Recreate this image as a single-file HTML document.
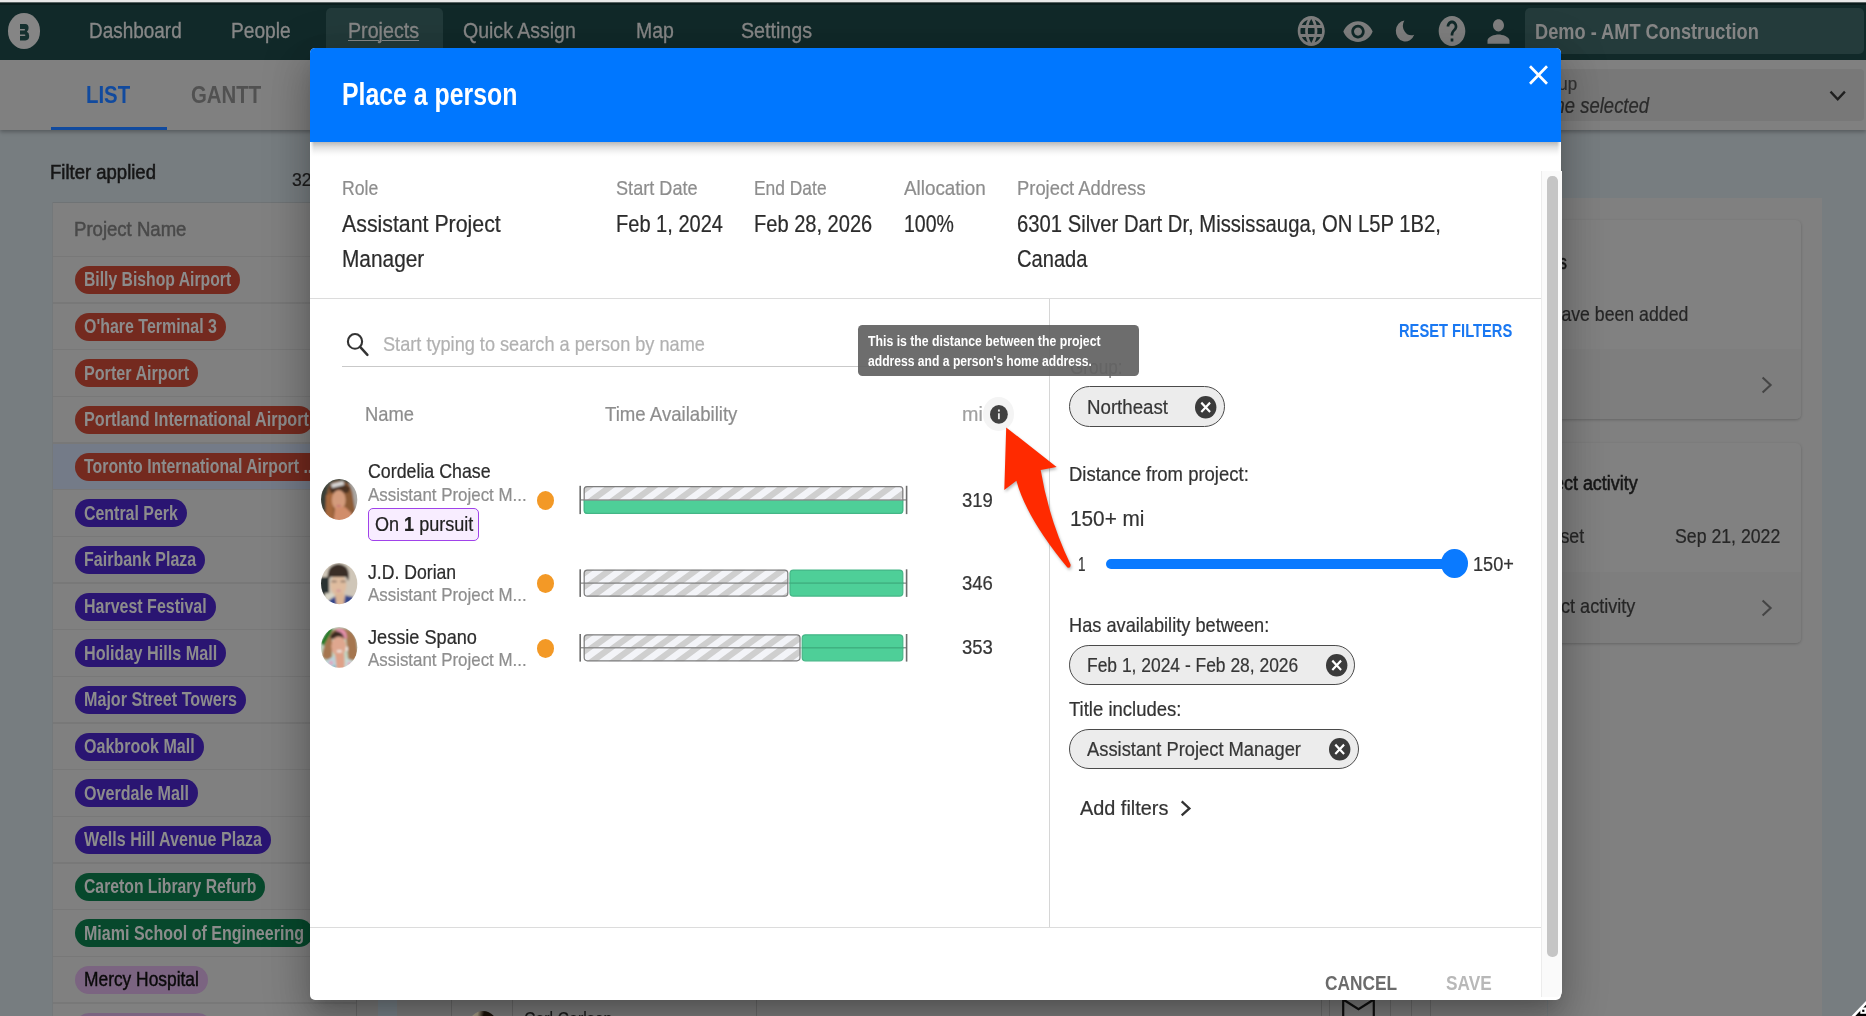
<!DOCTYPE html>
<html><head><meta charset="utf-8"><title>Place a person</title>
<style>
html,body{margin:0;padding:0;width:1866px;height:1016px;overflow:hidden;}
body{width:1866px;height:1016px;overflow:hidden;position:relative;background:#777d80;font-family:"Liberation Sans",sans-serif;}
.t{position:absolute;white-space:nowrap;line-height:1;transform-origin:0 0;-webkit-text-stroke:0.22px currentColor;}
.b{position:absolute;}
svg{position:absolute;overflow:visible;}
#root{position:absolute;left:0;top:0;width:1866px;height:1016px;overflow:hidden;}
</style></head><body><div id="root">
<div class="b" style="left:52.00px;top:202.00px;width:305.00px;height:900.00px;background:#808080;"></div>
<div class="b" style="left:357.00px;top:202.50px;width:1190.00px;height:900.00px;background:#808080;"></div>
<div class="b" style="left:1548.00px;top:197.50px;width:273.50px;height:900.00px;background:#808080;"></div>
<div class="b" style="left:0.00px;top:60.00px;width:1866.00px;height:70.30px;background:#808080;box-shadow:0 2px 4px rgba(0,0,0,.28);"></div>
<div class="b" style="left:0.00px;top:0.00px;width:1866.00px;height:60.30px;background:#112929;"></div>
<div class="b" style="left:0.00px;top:0.00px;width:1866.00px;height:2.00px;background:#e9e9e9;"></div>
<div class="b" style="left:0.00px;top:2.00px;width:1866.00px;height:1.00px;background:#5a6464;"></div>
<div class="b" style="left:0.00px;top:3.00px;width:1866.00px;height:1.50px;background:#0b1d1d;"></div>
<div class="b" style="left:7.9px;top:13.4px;width:32.4px;height:35.5px;border-radius:50%;background:#858585;"></div>
<svg style="left:19.9px;top:23.7px" width="9.2" height="16.4" viewBox="0 0 9.2 16.4"><path fill="#15302f" fill-rule="evenodd" d="M0 0 H5.2 Q8.6 0 8.6 3.9 Q8.6 6.6 6.9 7.7 Q9.2 8.8 9.2 12 Q9.2 16.4 5.4 16.4 H0 Z M0 4.9 V6.5 H4.3 Q5.1 6.5 5.1 5.7 Q5.1 4.9 4.3 4.9 Z M0 10.4 V12.0 H4.6 Q5.4 12.0 5.4 11.2 Q5.4 10.4 4.6 10.4 Z"/></svg>
<div class="t" style="left:89.00px;top:20.20px;font-size:21.95px;transform:scaleX(0.8639);color:#878787;-webkit-text-stroke:0.35px #878787;">Dashboard</div>
<div class="t" style="left:231.40px;top:20.20px;font-size:21.95px;transform:scaleX(0.8720);color:#878787;-webkit-text-stroke:0.35px #878787;">People</div>
<div class="b" style="left:326.00px;top:7.50px;width:117.00px;height:60.00px;background:#223a3a;border-radius:5px 5px 0 0;"></div>
<div class="t" style="left:348.15px;top:20.20px;font-size:21.95px;transform:scaleX(0.8969);color:#878787;-webkit-text-stroke:0.35px #878787;text-decoration:underline;text-decoration-thickness:1.3px;text-underline-offset:1.6px;">Projects</div>
<div class="t" style="left:462.65px;top:20.20px;font-size:21.95px;transform:scaleX(0.8896);color:#878787;-webkit-text-stroke:0.35px #878787;">Quick Assign</div>
<div class="t" style="left:635.65px;top:20.20px;font-size:21.95px;transform:scaleX(0.8867);color:#878787;-webkit-text-stroke:0.35px #878787;">Map</div>
<div class="t" style="left:741.10px;top:20.20px;font-size:21.95px;transform:scaleX(0.8966);color:#878787;-webkit-text-stroke:0.35px #878787;">Settings</div>
<div class="b" style="left:1525.00px;top:8.00px;width:339.00px;height:45.80px;background:#243b3b;border-radius:5px;"></div>
<div class="t" style="left:1534.70px;top:20.60px;font-size:21.22px;transform:scaleX(0.8578);color:#858585;font-weight:bold;-webkit-text-stroke:0;">Demo - AMT Construction</div>
<svg style="left:1295.10px;top:13.00px" width="32.50" height="36.00" viewBox="0 0 24 24" preserveAspectRatio="none"><path fill="#7f7f7f" d="M11.99 2C6.47 2 2 6.48 2 12s4.47 10 9.99 10C17.52 22 22 17.52 22 12S17.52 2 11.99 2zm6.93 6h-2.95c-.32-1.25-.78-2.45-1.38-3.56 1.84.63 3.37 1.91 4.33 3.56zM12 4.04c.83 1.2 1.48 2.53 1.91 3.96h-3.82c.43-1.43 1.08-2.76 1.91-3.96zM4.26 14C4.1 13.36 4 12.69 4 12s.1-1.36.26-2h3.38c-.08.66-.14 1.32-.14 2 0 .68.06 1.34.14 2H4.26zm.82 2h2.95c.32 1.25.78 2.45 1.38 3.56-1.84-.63-3.37-1.9-4.33-3.56zm2.95-8H5.08c.96-1.66 2.49-2.93 4.33-3.56C8.81 5.55 8.35 6.75 8.03 8zM12 19.96c-.83-1.2-1.48-2.53-1.91-3.96h3.82c-.43 1.43-1.08 2.76-1.91 3.96zM14.34 14H9.66c-.09-.66-.16-1.32-.16-2 0-.68.07-1.35.16-2h4.68c.09.65.16 1.32.16 2 0 .68-.07 1.34-.16 2zm.25 5.56c.6-1.11 1.06-2.31 1.38-3.56h2.95c-.96 1.65-2.49 2.93-4.33 3.56zM16.36 14c.08-.66.14-1.32.14-2 0-.68-.06-1.34-.14-2h3.38c.16.64.26 1.31.26 2s-.1 1.36-.26 2h-3.38z"/></svg>
<svg style="left:1342.10px;top:14.70px" width="32.00" height="33.20" viewBox="0 0 24 24" preserveAspectRatio="none"><path fill="#7f7f7f" d="M12 4.5C7 4.5 2.73 7.61 1 12c1.73 4.39 6 7.500 11 7.500s9.270-3.110 11-7.500c-1.730-4.390-6-7.500-11-7.500zM12 17c-2.760 0-5-2.240-5-5s2.240-5 5-5 5 2.240 5 5-2.240 5-5 5zm0-8c-1.660 0-3 1.340-3 3s1.340 3 3 3 3-1.340 3-3-1.340-3-3-3z"/></svg>
<svg style="left:0;top:0" width="1866" height="70" viewBox="0 0 1866 70"><path fill="#7f7f7f" d="M1404.4 20.6 A9.5 10.5 0 1 0 1414.2 34.8 A8.6 9.45 0 0 1 1404.4 20.6Z"/></svg>
<svg style="left:1435.80px;top:13.00px" width="32.00" height="36.00" viewBox="0 0 24 24" preserveAspectRatio="none"><path fill="#7f7f7f" d="M12 2C6.480 2 2 6.480 2 12s4.480 10 10 10 10-4.480 10-10S17.520 2 12 2zm1 17h-2v-2h2v2zm2.070-7.750l-.9.920C13.450 12.900 13 13.500 13 15h-2v-.5c0-1.100.450-2.100 1.170-2.830l1.240-1.260c.370-.360.590-.860.590-1.410 0-1.100-.9-2-2-2s-2 .9-2 2H8c0-2.210 1.790-4 4-4s4 1.790 4 4c0 .880-.360 1.680-.930 2.250z"/></svg>
<svg style="left:1482.10px;top:12.90px" width="33.00" height="36.80" viewBox="0 0 24 24" preserveAspectRatio="none"><path fill="#7f7f7f" d="M12 12c2.210 0 4-1.790 4-4s-1.790-4-4-4-4 1.790-4 4 1.790 4 4 4zm0 2c-2.670 0-8 1.340-8 4v2h16v-2c0-2.660-5.330-4-8-4z"/></svg>
<div class="t" style="left:86.30px;top:83.20px;font-size:23.84px;transform:scaleX(0.8557);color:#114a9e;font-weight:bold;-webkit-text-stroke:0;">LIST</div>
<div class="t" style="left:190.80px;top:83.20px;font-size:23.84px;transform:scaleX(0.8551);color:#515151;font-weight:bold;-webkit-text-stroke:0;">GANTT</div>
<div class="b" style="left:50.50px;top:127.40px;width:116.50px;height:2.80px;background:#114a9e;"></div>
<div class="b" style="left:1548.00px;top:68.80px;width:316.00px;height:52.50px;background:#787878;border-radius:4px;"></div>
<div class="t" style="left:1530.28px;top:75.80px;font-size:17.81px;transform:scaleX(0.9522);color:#333333;">Group</div>
<div class="t" style="left:1531.15px;top:94.90px;font-size:21.60px;transform:scaleX(0.8549);color:#2b2b2b;font-style:italic;">None selected</div>
<svg style="left:1829px;top:90px" width="18" height="12" viewBox="0 0 18 12"><path d="M1.5 1.6 L8.7 9.4 L15.9 1.6" fill="none" stroke="#1f1f1f" stroke-width="2.3"/></svg>
<div class="t" style="left:50.00px;top:161.70px;font-size:20.06px;transform:scaleX(0.9231);color:#161616;-webkit-text-stroke:0.55px #161616;">Filter applied</div>
<div class="t" style="left:292.40px;top:169.60px;font-size:19.19px;transform:scaleX(0.9187);color:#1c1c1c;">32</div>
<div class="t" style="left:73.50px;top:219.20px;font-size:20.06px;transform:scaleX(0.9258);color:#494949;-webkit-text-stroke:0.5px #494949;">Project Name</div>
<div class="b" style="left:52.00px;top:201.80px;width:305.00px;height:1.10px;background:#6f7375;"></div>
<div class="b" style="left:52.00px;top:202.00px;width:1.00px;height:900.00px;background:#74787a;"></div>
<div class="b" style="left:53.00px;top:255.70px;width:304.00px;height:1.40px;background:#787878;"></div>
<div class="b" style="left:74.80px;top:265.90px;width:165.50px;height:28.20px;background:#742a1f;border-radius:14.1px;"></div>
<div class="t" style="left:83.80px;top:270.40px;font-size:19.33px;transform:scaleX(0.8142);color:#8c8c8c;font-weight:bold;-webkit-text-stroke:0;">Billy Bishop Airport</div>
<div class="b" style="left:53.00px;top:302.37px;width:304.00px;height:1.40px;background:#787878;"></div>
<div class="b" style="left:74.80px;top:312.57px;width:151.30px;height:28.20px;background:#742a1f;border-radius:14.1px;"></div>
<div class="t" style="left:83.80px;top:317.07px;font-size:19.33px;transform:scaleX(0.8255);color:#8c8c8c;font-weight:bold;-webkit-text-stroke:0;">O&#x27;hare Terminal 3</div>
<div class="b" style="left:53.00px;top:349.04px;width:304.00px;height:1.40px;background:#787878;"></div>
<div class="b" style="left:74.80px;top:359.24px;width:123.50px;height:28.20px;background:#742a1f;border-radius:14.1px;"></div>
<div class="t" style="left:83.80px;top:363.74px;font-size:19.33px;transform:scaleX(0.8348);color:#8c8c8c;font-weight:bold;-webkit-text-stroke:0;">Porter Airport</div>
<div class="b" style="left:53.00px;top:395.71px;width:304.00px;height:1.40px;background:#787878;"></div>
<div class="b" style="left:74.80px;top:405.91px;width:238.70px;height:28.20px;background:#742a1f;border-radius:14.1px;"></div>
<div class="t" style="left:83.80px;top:410.41px;font-size:19.33px;transform:scaleX(0.8365);color:#8c8c8c;font-weight:bold;-webkit-text-stroke:0;">Portland International Airport</div>
<div class="b" style="left:53.00px;top:443.08px;width:304.00px;height:46.67px;background:#747b88;"></div>
<div class="b" style="left:53.00px;top:442.38px;width:304.00px;height:1.40px;background:#787878;"></div>
<div class="b" style="left:74.80px;top:452.58px;width:255.20px;height:28.20px;background:#742a1f;border-radius:14.1px;"></div>
<div class="t" style="left:83.80px;top:457.08px;font-size:19.33px;transform:scaleX(0.8208);color:#8c8c8c;font-weight:bold;-webkit-text-stroke:0;">Toronto International Airport ...</div>
<div class="b" style="left:53.00px;top:489.05px;width:304.00px;height:1.40px;background:#787878;"></div>
<div class="b" style="left:74.80px;top:499.25px;width:112.20px;height:28.20px;background:#2a1572;border-radius:14.1px;"></div>
<div class="t" style="left:83.80px;top:503.75px;font-size:19.33px;transform:scaleX(0.8243);color:#8c8c8c;font-weight:bold;-webkit-text-stroke:0;">Central Perk</div>
<div class="b" style="left:53.00px;top:535.72px;width:304.00px;height:1.40px;background:#787878;"></div>
<div class="b" style="left:74.80px;top:545.92px;width:130.70px;height:28.20px;background:#2a1572;border-radius:14.1px;"></div>
<div class="t" style="left:83.80px;top:550.42px;font-size:19.33px;transform:scaleX(0.8294);color:#8c8c8c;font-weight:bold;-webkit-text-stroke:0;">Fairbank Plaza</div>
<div class="b" style="left:53.00px;top:582.39px;width:304.00px;height:1.40px;background:#787878;"></div>
<div class="b" style="left:74.80px;top:592.59px;width:141.00px;height:28.20px;background:#2a1572;border-radius:14.1px;"></div>
<div class="t" style="left:83.80px;top:597.09px;font-size:19.33px;transform:scaleX(0.8274);color:#8c8c8c;font-weight:bold;-webkit-text-stroke:0;">Harvest Festival</div>
<div class="b" style="left:53.00px;top:629.06px;width:304.00px;height:1.40px;background:#787878;"></div>
<div class="b" style="left:74.80px;top:639.26px;width:151.50px;height:28.20px;background:#2a1572;border-radius:14.1px;"></div>
<div class="t" style="left:83.80px;top:643.76px;font-size:19.33px;transform:scaleX(0.8378);color:#8c8c8c;font-weight:bold;-webkit-text-stroke:0;">Holiday Hills Mall</div>
<div class="b" style="left:53.00px;top:675.73px;width:304.00px;height:1.40px;background:#787878;"></div>
<div class="b" style="left:74.80px;top:685.93px;width:171.20px;height:28.20px;background:#2a1572;border-radius:14.1px;"></div>
<div class="t" style="left:83.80px;top:690.43px;font-size:19.33px;transform:scaleX(0.8340);color:#8c8c8c;font-weight:bold;-webkit-text-stroke:0;">Major Street Towers</div>
<div class="b" style="left:53.00px;top:722.40px;width:304.00px;height:1.40px;background:#787878;"></div>
<div class="b" style="left:74.80px;top:732.60px;width:129.00px;height:28.20px;background:#2a1572;border-radius:14.1px;"></div>
<div class="t" style="left:83.80px;top:737.10px;font-size:19.33px;transform:scaleX(0.8310);color:#8c8c8c;font-weight:bold;-webkit-text-stroke:0;">Oakbrook Mall</div>
<div class="b" style="left:53.00px;top:769.07px;width:304.00px;height:1.40px;background:#787878;"></div>
<div class="b" style="left:74.80px;top:779.27px;width:123.20px;height:28.20px;background:#2a1572;border-radius:14.1px;"></div>
<div class="t" style="left:83.80px;top:783.77px;font-size:19.33px;transform:scaleX(0.8344);color:#8c8c8c;font-weight:bold;-webkit-text-stroke:0;">Overdale Mall</div>
<div class="b" style="left:53.00px;top:815.74px;width:304.00px;height:1.40px;background:#787878;"></div>
<div class="b" style="left:74.80px;top:825.94px;width:196.50px;height:28.20px;background:#2a1572;border-radius:14.1px;"></div>
<div class="t" style="left:83.80px;top:830.44px;font-size:19.33px;transform:scaleX(0.8316);color:#8c8c8c;font-weight:bold;-webkit-text-stroke:0;">Wells Hill Avenue Plaza</div>
<div class="b" style="left:53.00px;top:862.41px;width:304.00px;height:1.40px;background:#787878;"></div>
<div class="b" style="left:74.80px;top:872.61px;width:190.70px;height:28.20px;background:#07482c;border-radius:14.1px;"></div>
<div class="t" style="left:83.80px;top:877.11px;font-size:19.33px;transform:scaleX(0.8147);color:#8c8c8c;font-weight:bold;-webkit-text-stroke:0;">Careton Library Refurb</div>
<div class="b" style="left:53.00px;top:909.08px;width:304.00px;height:1.40px;background:#787878;"></div>
<div class="b" style="left:74.80px;top:919.28px;width:238.00px;height:28.20px;background:#07482c;border-radius:14.1px;"></div>
<div class="t" style="left:83.80px;top:923.78px;font-size:19.33px;transform:scaleX(0.8293);color:#8c8c8c;font-weight:bold;-webkit-text-stroke:0;">Miami School of Engineering</div>
<div class="b" style="left:53.00px;top:955.75px;width:304.00px;height:1.40px;background:#787878;"></div>
<div class="b" style="left:74.80px;top:965.95px;width:133.20px;height:28.20px;background:#7b6481;border-radius:14.1px;"></div>
<div class="t" style="left:83.80px;top:970.45px;font-size:19.33px;transform:scaleX(0.8988);color:#0a0a0a;-webkit-text-stroke:0.4px #0a0a0a;">Mercy Hospital</div>
<div class="b" style="left:53.00px;top:1002.42px;width:304.00px;height:1.40px;background:#787878;"></div>
<div class="b" style="left:74.80px;top:1012.62px;width:137.20px;height:28.20px;background:#7b6481;border-radius:14.1px;"></div>
<div class="t" style="left:83.80px;top:1017.12px;font-size:19.33px;transform:scaleX(0.8259);color:#0a0a0a;-webkit-text-stroke:0.4px #0a0a0a;">Mercy Hospital 2</div>
<div class="b" style="left:356.20px;top:1000.00px;width:1.00px;height:16.00px;background:#6e6e6e;"></div>
<div class="b" style="left:451.00px;top:1000.00px;width:1.00px;height:16.00px;background:#6e6e6e;"></div>
<div class="b" style="left:512.00px;top:1000.00px;width:1.00px;height:16.00px;background:#6e6e6e;"></div>
<div class="b" style="left:756.00px;top:1000.00px;width:1.00px;height:16.00px;background:#6e6e6e;"></div>
<div class="b" style="left:1320.60px;top:1000.00px;width:1.00px;height:16.00px;background:#6e6e6e;"></div>
<div class="b" style="left:1328.80px;top:1000.00px;width:1.00px;height:16.00px;background:#6e6e6e;"></div>
<div class="b" style="left:1389.50px;top:1000.00px;width:1.00px;height:16.00px;background:#6e6e6e;"></div>
<div class="b" style="left:1410.70px;top:1000.00px;width:1.00px;height:16.00px;background:#6e6e6e;"></div>
<div class="b" style="left:1430.40px;top:1000.00px;width:1.00px;height:16.00px;background:#6e6e6e;"></div>
<div class="b" style="left:378.00px;top:1000.00px;width:18.50px;height:16.00px;background:#7b858c;"></div>
<div class="b" style="left:467.5px;top:1010.6px;width:30px;height:33px;border-radius:50%;background:linear-gradient(100deg,#b3ab93 0,#a89f86 28%,#1c120a 46%,#1c120a 100%);"></div>
<div class="t" style="left:524.10px;top:1008.90px;font-size:20.06px;transform:scaleX(0.7931);color:#1a1a1a;">Carl Carlson</div>
<svg style="left:1342px;top:996px" width="33" height="22" viewBox="0 0 33 22"><path d="M1.2 0 V22 M31.8 0 V22 M1.2 3.5 L16.5 13.2 L31.8 3.5" fill="none" stroke="#101010" stroke-width="2.2"/></svg>
<svg style="left:0;top:0" width="1866" height="1016" viewBox="0 0 1866 1016"><path d="M1851.6 1016 L1866 1001 L1866 1016Z" fill="#fff"/><path d="M1855.3 1016 L1866 1004.8 L1866 1016Z" fill="#000"/><rect x="1860.3" y="1007.5" width="6" height="6.3" fill="#fff"/><rect x="1862.2" y="1009.7" width="2.2" height="2.2" fill="#000"/></svg>
<div class="b" style="left:1548.00px;top:219.70px;width:253.00px;height:199.60px;background:#818181;border-radius:5px;box-shadow:0 1px 3px rgba(0,0,0,.22);"></div>
<div class="b" style="left:1548.00px;top:348.90px;width:253.00px;height:70.40px;background:#7e7e7e;border-radius:0 0 5px 0;"></div>
<div class="b" style="left:1548.00px;top:443.00px;width:253.00px;height:199.60px;background:#818181;border-radius:5px;box-shadow:0 1px 3px rgba(0,0,0,.22);"></div>
<div class="b" style="left:1548.00px;top:572.00px;width:253.00px;height:70.60px;background:#7e7e7e;border-radius:0 0 5px 0;"></div>
<div class="t" style="left:1512.00px;top:252.60px;font-size:19.77px;transform:scaleX(0.7689);color:#171717;-webkit-text-stroke:0.55px #171717;">Pursuits</div>
<div class="t" style="left:1466.02px;top:303.70px;font-size:20.20px;transform:scaleX(0.8763);color:#262626;">No people have been added</div>
<div class="t" style="left:1521.92px;top:474.40px;font-size:19.77px;transform:scaleX(0.9086);color:#171717;-webkit-text-stroke:0.55px #171717;">Project activity</div>
<div class="t" style="left:1505.83px;top:526.30px;font-size:20.06px;transform:scaleX(0.8875);color:#262626;">Last reset</div>
<div class="t" style="left:1675.00px;top:526.30px;font-size:20.06px;transform:scaleX(0.8823);color:#262626;">Sep 21, 2022</div>
<div class="t" style="left:1477.09px;top:596.20px;font-size:20.06px;transform:scaleX(0.9013);color:#262626;">View project activity</div>
<svg style="left:1761px;top:375.7px" width="12" height="18" viewBox="0 0 12 18"><path d="M1.6 1.6 L9.6 9 L1.6 16.4" fill="none" stroke="#454545" stroke-width="2.1"/></svg>
<svg style="left:1761px;top:598.7px" width="12" height="18" viewBox="0 0 12 18"><path d="M1.6 1.6 L9.6 9 L1.6 16.4" fill="none" stroke="#454545" stroke-width="2.1"/></svg>
<div class="b" style="left:310.1px;top:48.3px;width:1251.1px;height:951.3px;background:#fff;border-radius:5px;box-shadow:0 11px 15px -7px rgba(0,0,0,.15),0 24px 38px 3px rgba(0,0,0,.16),0 9px 46px 8px rgba(0,0,0,.14);"></div>
<div class="b" style="left:310.10px;top:141.50px;width:1251.10px;height:15.00px;background:;background:linear-gradient(to bottom,rgba(0,0,0,.28) 0,rgba(0,0,0,.22) 12%,rgba(0,0,0,.13) 33%,rgba(0,0,0,.06) 58%,rgba(0,0,0,.015) 82%,rgba(0,0,0,0) 100%);"></div>
<div class="b" style="left:310.10px;top:142.00px;width:4.00px;height:14.50px;background:;background:linear-gradient(to right,#fff 0,rgba(255,255,255,0) 100%);"></div>
<div class="b" style="left:1557.20px;top:142.00px;width:4.00px;height:14.50px;background:;background:linear-gradient(to left,#fff 0,rgba(255,255,255,0) 100%);"></div>
<div class="b" style="left:310.10px;top:48.30px;width:1251.10px;height:93.70px;background:#0077ff;border-radius:5px 5px 0 0;"></div>
<div class="t" style="left:341.60px;top:80.00px;font-size:30.81px;transform:scaleX(0.8064);color:#ffffff;font-weight:bold;-webkit-text-stroke:0;">Place a person</div>
<svg style="left:1527.6px;top:63.6px" width="21" height="22" viewBox="0 0 21 22"><path d="M2 2.2 L19 19.8 M19 2.2 L2 19.8" fill="none" stroke="#fff" stroke-width="2.7"/></svg>
<div class="b" style="left:1541.40px;top:171.30px;width:19.80px;height:825.30px;background:#fafafa;border-left:1px solid #ececec;border-radius:0 0 5px 0;"></div>
<div class="b" style="left:1547.40px;top:176.00px;width:10.20px;height:781.00px;background:#c5c5c5;border-radius:5.1px;"></div>
<div class="t" style="left:341.70px;top:178.00px;font-size:20.64px;transform:scaleX(0.8550);color:#8d8d8d;">Role</div>
<div class="t" style="left:615.80px;top:178.00px;font-size:20.64px;transform:scaleX(0.8793);color:#8d8d8d;">Start Date</div>
<div class="t" style="left:754.20px;top:178.00px;font-size:20.64px;transform:scaleX(0.8437);color:#8d8d8d;">End Date</div>
<div class="t" style="left:903.70px;top:178.00px;font-size:20.64px;transform:scaleX(0.9140);color:#8d8d8d;">Allocation</div>
<div class="t" style="left:1016.70px;top:178.00px;font-size:20.64px;transform:scaleX(0.8911);color:#8d8d8d;">Project Address</div>
<div class="t" style="left:341.70px;top:211.70px;font-size:23.84px;transform:scaleX(0.8946);color:#2c2c2c;">Assistant Project</div>
<div class="t" style="left:342.00px;top:246.70px;font-size:23.84px;transform:scaleX(0.8747);color:#2c2c2c;">Manager</div>
<div class="t" style="left:616.00px;top:211.70px;font-size:23.84px;transform:scaleX(0.8411);color:#2c2c2c;">Feb 1, 2024</div>
<div class="t" style="left:754.20px;top:211.70px;font-size:23.84px;transform:scaleX(0.8420);color:#2c2c2c;">Feb 28, 2026</div>
<div class="t" style="left:904.40px;top:211.70px;font-size:23.84px;transform:scaleX(0.8184);color:#2c2c2c;">100%</div>
<div class="t" style="left:1017.00px;top:211.70px;font-size:23.84px;transform:scaleX(0.8496);color:#2c2c2c;">6301 Silver Dart Dr, Mississauga, ON L5P 1B2,</div>
<div class="t" style="left:1017.00px;top:246.70px;font-size:23.84px;transform:scaleX(0.8441);color:#2c2c2c;">Canada</div>
<div class="b" style="left:310.10px;top:297.80px;width:1231.30px;height:1.50px;background:#dcdcdc;"></div>
<div class="b" style="left:1049.20px;top:298.50px;width:1.30px;height:629.00px;background:#d6d6d6;"></div>
<div class="b" style="left:310.10px;top:926.80px;width:1231.30px;height:1.50px;background:#dcdcdc;"></div>
<svg style="left:345.5px;top:332.3px" width="23" height="24" viewBox="0 0 23 24"><ellipse cx="9" cy="9.4" rx="7.1" ry="7.4" fill="none" stroke="#333" stroke-width="2.1"/><path d="M14.1 14.9 L21.4 22.8" stroke="#333" stroke-width="2.5" stroke-linecap="round"/></svg>
<div class="t" style="left:383.30px;top:333.70px;font-size:20.78px;transform:scaleX(0.8742);color:#b1b1b1;">Start typing to search a person by name</div>
<div class="b" style="left:342.00px;top:365.60px;width:690.00px;height:1.30px;background:#c9c9c9;"></div>
<div class="t" style="left:365.30px;top:404.20px;font-size:20.64px;transform:scaleX(0.8898);color:#8d8d8d;">Name</div>
<div class="t" style="left:605.00px;top:404.20px;font-size:20.64px;transform:scaleX(0.9024);color:#8d8d8d;">Time Availability</div>
<div class="t" style="left:962.30px;top:404.10px;font-size:20.64px;transform:scaleX(0.9552);color:#a0a0a0;">mi</div>
<div class="b" style="left:983.2px;top:397.2px;width:30.6px;height:33.4px;border-radius:50%;background:#f4f4f4;"></div>
<svg style="left:989.7px;top:404.6px" width="17.8" height="18.8" viewBox="0 0 20 20" preserveAspectRatio="none"><circle cx="10" cy="10" r="10" fill="#414141"/><rect x="8.95" y="8.8" width="2.1" height="6.3" fill="#e6e6e6"/><rect x="8.95" y="4.8" width="2.1" height="2.2" fill="#e6e6e6"/></svg>
<div class="t" style="left:367.80px;top:461.00px;font-size:20.06px;transform:scaleX(0.8875);color:#2c2c2c;">Cordelia Chase</div>
<div class="t" style="left:367.90px;top:485.50px;font-size:18.31px;transform:scaleX(0.9232);color:#8e8e8e;">Assistant Project M...</div>
<div class="b" style="left:536.5px;top:490.5px;width:17.6px;height:19px;border-radius:50%;background:#f39926;"></div>
<div class="t" style="left:367.80px;top:561.75px;font-size:20.06px;transform:scaleX(0.8793);color:#2c2c2c;">J.D. Dorian</div>
<div class="t" style="left:367.90px;top:586.25px;font-size:18.31px;transform:scaleX(0.9232);color:#8e8e8e;">Assistant Project M...</div>
<div class="b" style="left:536.5px;top:573.7px;width:17.6px;height:19px;border-radius:50%;background:#f39926;"></div>
<div class="t" style="left:367.80px;top:626.75px;font-size:20.06px;transform:scaleX(0.9051);color:#2c2c2c;">Jessie Spano</div>
<div class="t" style="left:367.90px;top:651.25px;font-size:18.31px;transform:scaleX(0.9232);color:#8e8e8e;">Assistant Project M...</div>
<div class="b" style="left:536.5px;top:638.5px;width:17.6px;height:19px;border-radius:50%;background:#f39926;"></div>
<div class="b" style="left:368.00px;top:508.10px;width:111.20px;height:32.70px;background:#f8edff;border:1.9px solid #a042ea;border-radius:5px;box-sizing:border-box;"></div>
<div class="t" style="left:374.60px;top:514.20px;font-size:20.64px;transform:scaleX(0.8753);color:#222;">On <b>1</b> pursuit</div>
<svg style="left:0;top:0" width="1866" height="1016" viewBox="0 0 1866 1016"><rect x="579.4" y="485.80" width="1.6" height="28.30" fill="#6c6c6c"/><rect x="905.8" y="485.80" width="1.6" height="28.30" fill="#6c6c6c"/><rect x="580" y="499.45" width="4" height="1" fill="#6c6c6c"/><rect x="903" y="499.45" width="3.5" height="1" fill="#6c6c6c"/><defs><clipPath id="bc1"><rect x="583.6" y="486.0" width="319.80" height="27.90" rx="3.6"/></clipPath></defs><g clip-path="url(#bc1)"><rect x="583.6" y="486.0" width="319.80" height="13.95" fill="#f3f4f8"/><defs><clipPath id="bh1"><rect x="583.6" y="486.0" width="319.80" height="13.95"/></clipPath></defs><path clip-path="url(#bh1)" fill="#cfcfcf" d="M521.90 499.95 L532.40 499.95 L551.60 486.00 L541.10 486.00Z M543.50 499.95 L554.00 499.95 L573.20 486.00 L562.70 486.00Z M565.10 499.95 L575.60 499.95 L594.80 486.00 L584.30 486.00Z M586.70 499.95 L597.20 499.95 L616.40 486.00 L605.90 486.00Z M608.30 499.95 L618.80 499.95 L638.00 486.00 L627.50 486.00Z M629.90 499.95 L640.40 499.95 L659.60 486.00 L649.10 486.00Z M651.50 499.95 L662.00 499.95 L681.20 486.00 L670.70 486.00Z M673.10 499.95 L683.60 499.95 L702.80 486.00 L692.30 486.00Z M694.70 499.95 L705.20 499.95 L724.40 486.00 L713.90 486.00Z M716.30 499.95 L726.80 499.95 L746.00 486.00 L735.50 486.00Z M737.90 499.95 L748.40 499.95 L767.60 486.00 L757.10 486.00Z M759.50 499.95 L770.00 499.95 L789.20 486.00 L778.70 486.00Z M781.10 499.95 L791.60 499.95 L810.80 486.00 L800.30 486.00Z M802.70 499.95 L813.20 499.95 L832.40 486.00 L821.90 486.00Z M824.30 499.95 L834.80 499.95 L854.00 486.00 L843.50 486.00Z M845.90 499.95 L856.40 499.95 L875.60 486.00 L865.10 486.00Z M867.50 499.95 L878.00 499.95 L897.20 486.00 L886.70 486.00Z M889.10 499.95 L899.60 499.95 L918.80 486.00 L908.30 486.00Z"/><rect x="583.6" y="499.95" width="319.80" height="13.95" fill="#4ecf98"/></g><path d="M584.2 499.95 V489.6 Q584.2 486.6 587.2 486.6 H899.8 Q902.8 486.6 902.8 489.6 V499.95" fill="none" stroke="#7d7d7d" stroke-width="1.2"/><path d="M584.2 499.95 V510.29999999999995 Q584.2 513.3 587.2 513.3 H899.8 Q902.8 513.3 902.8 510.29999999999995 V499.95" fill="none" stroke="#44b686" stroke-width="1.2"/><rect x="583.6" y="499.35" width="319.80" height="1.2" fill="#8a7f84"/></svg>
<svg style="left:0;top:0" width="1866" height="1016" viewBox="0 0 1866 1016"><rect x="579.4" y="569.30" width="1.6" height="27.60" fill="#6c6c6c"/><rect x="905.8" y="569.30" width="1.6" height="27.60" fill="#6c6c6c"/><rect x="580" y="582.60" width="4" height="1" fill="#6c6c6c"/><rect x="903" y="582.60" width="3.5" height="1" fill="#6c6c6c"/><defs><clipPath id="bc2"><rect x="583.6" y="569.5" width="204.80" height="27.20" rx="3.6"/></clipPath><clipPath id="bh2a"><rect x="583.6" y="569.5" width="204.80" height="13.60"/></clipPath><clipPath id="bh2b"><rect x="583.6" y="583.1" width="204.80" height="13.60"/></clipPath></defs><g clip-path="url(#bc2)"><rect x="583.6" y="569.5" width="204.80" height="27.20" fill="#f3f4f8"/><path clip-path="url(#bh2a)" fill="#cfcfcf" d="M521.90 583.10 L532.40 583.10 L551.12 569.50 L540.62 569.50Z M543.50 583.10 L554.00 583.10 L572.72 569.50 L562.22 569.50Z M565.10 583.10 L575.60 583.10 L594.32 569.50 L583.82 569.50Z M586.70 583.10 L597.20 583.10 L615.92 569.50 L605.42 569.50Z M608.30 583.10 L618.80 583.10 L637.52 569.50 L627.02 569.50Z M629.90 583.10 L640.40 583.10 L659.12 569.50 L648.62 569.50Z M651.50 583.10 L662.00 583.10 L680.72 569.50 L670.22 569.50Z M673.10 583.10 L683.60 583.10 L702.32 569.50 L691.82 569.50Z M694.70 583.10 L705.20 583.10 L723.92 569.50 L713.42 569.50Z M716.30 583.10 L726.80 583.10 L745.52 569.50 L735.02 569.50Z M737.90 583.10 L748.40 583.10 L767.12 569.50 L756.62 569.50Z M759.50 583.10 L770.00 583.10 L788.72 569.50 L778.22 569.50Z M781.10 583.10 L791.60 583.10 L810.32 569.50 L799.82 569.50Z"/><path clip-path="url(#bh2b)" fill="#cfcfcf" d="M521.90 596.70 L532.40 596.70 L551.12 583.10 L540.62 583.10Z M543.50 596.70 L554.00 596.70 L572.72 583.10 L562.22 583.10Z M565.10 596.70 L575.60 596.70 L594.32 583.10 L583.82 583.10Z M586.70 596.70 L597.20 596.70 L615.92 583.10 L605.42 583.10Z M608.30 596.70 L618.80 596.70 L637.52 583.10 L627.02 583.10Z M629.90 596.70 L640.40 596.70 L659.12 583.10 L648.62 583.10Z M651.50 596.70 L662.00 596.70 L680.72 583.10 L670.22 583.10Z M673.10 596.70 L683.60 596.70 L702.32 583.10 L691.82 583.10Z M694.70 596.70 L705.20 596.70 L723.92 583.10 L713.42 583.10Z M716.30 596.70 L726.80 596.70 L745.52 583.10 L735.02 583.10Z M737.90 596.70 L748.40 596.70 L767.12 583.10 L756.62 583.10Z M759.50 596.70 L770.00 596.70 L788.72 583.10 L778.22 583.10Z M781.10 596.70 L791.60 596.70 L810.32 583.10 L799.82 583.10Z"/></g><rect x="584.2" y="570.1" width="203.60" height="26.00" rx="3.2" fill="none" stroke="#7d7d7d" stroke-width="1.2"/><rect x="583.6" y="582.50" width="204.80" height="1.2" fill="#7d7d7d"/><rect x="790.00" y="570.1" width="112.80" height="26.00" rx="3.4" fill="#4ecf98" stroke="#44b686" stroke-width="1.2"/><rect x="789.40" y="582.40" width="114.00" height="1.4" fill="#3fae7f"/></svg>
<svg style="left:0;top:0" width="1866" height="1016" viewBox="0 0 1866 1016"><rect x="579.4" y="634.00" width="1.6" height="27.60" fill="#6c6c6c"/><rect x="905.8" y="634.00" width="1.6" height="27.60" fill="#6c6c6c"/><rect x="580" y="647.30" width="4" height="1" fill="#6c6c6c"/><rect x="903" y="647.30" width="3.5" height="1" fill="#6c6c6c"/><defs><clipPath id="bc3"><rect x="583.6" y="634.2" width="217.00" height="27.20" rx="3.6"/></clipPath><clipPath id="bh3a"><rect x="583.6" y="634.2" width="217.00" height="13.60"/></clipPath><clipPath id="bh3b"><rect x="583.6" y="647.8" width="217.00" height="13.60"/></clipPath></defs><g clip-path="url(#bc3)"><rect x="583.6" y="634.2" width="217.00" height="27.20" fill="#f3f4f8"/><path clip-path="url(#bh3a)" fill="#cfcfcf" d="M521.90 647.80 L532.40 647.80 L551.12 634.20 L540.62 634.20Z M543.50 647.80 L554.00 647.80 L572.72 634.20 L562.22 634.20Z M565.10 647.80 L575.60 647.80 L594.32 634.20 L583.82 634.20Z M586.70 647.80 L597.20 647.80 L615.92 634.20 L605.42 634.20Z M608.30 647.80 L618.80 647.80 L637.52 634.20 L627.02 634.20Z M629.90 647.80 L640.40 647.80 L659.12 634.20 L648.62 634.20Z M651.50 647.80 L662.00 647.80 L680.72 634.20 L670.22 634.20Z M673.10 647.80 L683.60 647.80 L702.32 634.20 L691.82 634.20Z M694.70 647.80 L705.20 647.80 L723.92 634.20 L713.42 634.20Z M716.30 647.80 L726.80 647.80 L745.52 634.20 L735.02 634.20Z M737.90 647.80 L748.40 647.80 L767.12 634.20 L756.62 634.20Z M759.50 647.80 L770.00 647.80 L788.72 634.20 L778.22 634.20Z M781.10 647.80 L791.60 647.80 L810.32 634.20 L799.82 634.20Z M802.70 647.80 L813.20 647.80 L831.92 634.20 L821.42 634.20Z"/><path clip-path="url(#bh3b)" fill="#cfcfcf" d="M521.90 661.40 L532.40 661.40 L551.12 647.80 L540.62 647.80Z M543.50 661.40 L554.00 661.40 L572.72 647.80 L562.22 647.80Z M565.10 661.40 L575.60 661.40 L594.32 647.80 L583.82 647.80Z M586.70 661.40 L597.20 661.40 L615.92 647.80 L605.42 647.80Z M608.30 661.40 L618.80 661.40 L637.52 647.80 L627.02 647.80Z M629.90 661.40 L640.40 661.40 L659.12 647.80 L648.62 647.80Z M651.50 661.40 L662.00 661.40 L680.72 647.80 L670.22 647.80Z M673.10 661.40 L683.60 661.40 L702.32 647.80 L691.82 647.80Z M694.70 661.40 L705.20 661.40 L723.92 647.80 L713.42 647.80Z M716.30 661.40 L726.80 661.40 L745.52 647.80 L735.02 647.80Z M737.90 661.40 L748.40 661.40 L767.12 647.80 L756.62 647.80Z M759.50 661.40 L770.00 661.40 L788.72 647.80 L778.22 647.80Z M781.10 661.40 L791.60 661.40 L810.32 647.80 L799.82 647.80Z M802.70 661.40 L813.20 661.40 L831.92 647.80 L821.42 647.80Z"/></g><rect x="584.2" y="634.8000000000001" width="215.80" height="26.00" rx="3.2" fill="none" stroke="#7d7d7d" stroke-width="1.2"/><rect x="583.6" y="647.20" width="217.00" height="1.2" fill="#7d7d7d"/><rect x="802.20" y="634.8000000000001" width="100.60" height="26.00" rx="3.4" fill="#4ecf98" stroke="#44b686" stroke-width="1.2"/><rect x="801.60" y="647.10" width="101.80" height="1.4" fill="#3fae7f"/></svg>
<div class="t" style="left:962.30px;top:490.40px;font-size:20.35px;transform:scaleX(0.9104);color:#363636;">319</div>
<div class="t" style="left:962.30px;top:573.00px;font-size:20.35px;transform:scaleX(0.9104);color:#363636;">346</div>
<div class="t" style="left:962.30px;top:637.40px;font-size:20.35px;transform:scaleX(0.9104);color:#363636;">353</div>
<svg style="left:321.0px;top:479.2px" width="36.3" height="40.9" viewBox="0 0 36 41" preserveAspectRatio="none"><defs><clipPath id="c479"><ellipse cx="18" cy="20.5" rx="18" ry="20.5"/></clipPath><filter id="f479" x="-20%" y="-20%" width="140%" height="140%"><feGaussianBlur stdDeviation="1.25"/></filter></defs><g clip-path="url(#c479)"><g filter="url(#f479)"><rect x="-6" y="-6" width="48" height="53" fill="#4a4d44"/><rect x="28" y="-6" width="14" height="40" fill="#a9a6a2"/><rect x="-6" y="8" width="12" height="26" fill="#3a3f38"/><path d="M6 14 Q8 2 18 2 Q29 2 31 13 L34 33 Q30 36 24 34 L24 46 L5 46 Z" fill="#8a5a36"/><path d="M8 9 Q18 -1 29 9 L27 14 L10 14Z" fill="#4b3324"/><path d="M10 5 L22 2 L23 6 L11 9Z" fill="#d6d6d6"/><path d="M5 16 L12 14 L12 44 L4 44Z" fill="#a5683c"/><ellipse cx="17.6" cy="21" rx="6.9" ry="10" fill="#d39b7b"/><path d="M14 29 L24 28 L31 35 L33 46 L12 46Z" fill="#d18d6a"/><ellipse cx="17.5" cy="27" rx="2.6" ry="1.1" fill="#c97a78"/></g></g></svg>
<svg style="left:320.9px;top:562.9px" width="36.3" height="41.2" viewBox="0 0 36 41" preserveAspectRatio="none"><defs><clipPath id="c562"><ellipse cx="18" cy="20.5" rx="18" ry="20.5"/></clipPath><filter id="f562" x="-20%" y="-20%" width="140%" height="140%"><feGaussianBlur stdDeviation="1.25"/></filter></defs><g clip-path="url(#c562)"><g filter="url(#f562)"><rect x="-6" y="-6" width="48" height="53" fill="#cfc6b8"/><rect x="-6" y="14" width="14" height="19" fill="#2b3231"/><rect x="4" y="30" width="10" height="8" fill="#d9d5c6"/><path d="M7 17 Q5 5 13 2 Q19 -1 25 4 Q29 9 27 18 L24 12 L11 12 Z" fill="#3a2e27"/><ellipse cx="17.3" cy="22" rx="7.9" ry="11" fill="#dfbc9f"/><path d="M14 30 L23 30 L24 46 L13 46Z" fill="#dcb596"/><path d="M8 37 L14 33 L16 46 L4 46Z" fill="#35478a"/><path d="M24 32 L33 34 L36 46 L22 46Z" fill="#35478a"/><path d="M10 11 Q17 7 25 11 L25 14 L10 14Z" fill="#3a2e27"/><ellipse cx="17.5" cy="27.6" rx="2.6" ry="1.2" fill="#d69a9a"/><rect x="10.5" y="17.5" width="5" height="1.8" fill="#8e7a6a"/><rect x="19.5" y="17.5" width="5" height="1.8" fill="#8e7a6a"/></g></g></svg>
<svg style="left:321.0px;top:627.4px" width="36.3" height="40.7" viewBox="0 0 36 41" preserveAspectRatio="none"><defs><clipPath id="c627"><ellipse cx="18" cy="20.5" rx="18" ry="20.5"/></clipPath><filter id="f627" x="-20%" y="-20%" width="140%" height="140%"><feGaussianBlur stdDeviation="1.25"/></filter></defs><g clip-path="url(#c627)"><g filter="url(#f627)"><rect x="-6" y="-6" width="48" height="53" fill="#c3d6c3"/><path d="M-1 16 L8 0 L12 2 L3 19Z" fill="#1f7a22"/><path d="M9 8 Q12 0 20 1 Q31 1 35 12 L37 30 Q33 36 27 33 L25 12 L11 12 L11 30 Q6 36 1 30 Q2 18 9 8Z" fill="#a5764f"/><path d="M9 9 Q14 1 23 4 L24 10 L10 12Z" fill="#3b2a21"/><path d="M15 2 Q22 0 25 6 L26 12 L23 11 Q22 5 15 4Z" fill="#e391ab"/><ellipse cx="17.6" cy="19.5" rx="7.4" ry="10" fill="#dfa78f"/><path d="M14 27 L23 27 L24 46 L14 46Z" fill="#dfa188"/><path d="M5 34 L14 29 L16 46 L4 46Z" fill="#bcd3da"/><path d="M24 31 L32 34 L33 46 L23 46Z" fill="#c7d9d6"/><circle cx="10" cy="36" r="2" fill="#e3a1c0"/><circle cx="28" cy="37" r="1.8" fill="#e3a1c0"/><circle cx="13" cy="40" r="1.6" fill="#7fb6c6"/><ellipse cx="18.2" cy="24.5" rx="2.8" ry="1.3" fill="#f0e6e0"/><rect x="24.5" y="20" width="2.2" height="4" fill="#f0ece8"/></g></g></svg>
<div class="t" style="left:1398.60px;top:321.90px;font-size:18.75px;transform:scaleX(0.7837);color:#1a78f2;font-weight:bold;-webkit-text-stroke:0;">RESET FILTERS</div>
<div class="t" style="left:1069.70px;top:356.80px;font-size:20.64px;transform:scaleX(0.8337);color:#8d8d8d;">Group:</div>
<div class="b" style="left:1069.10px;top:386.10px;width:156.40px;height:41.00px;background:#ececec;border:1.7px solid #4a4a4a;border-radius:20.5px;box-sizing:border-box;"></div>
<div class="t" style="left:1086.50px;top:396.70px;font-size:20.35px;transform:scaleX(0.9182);color:#363636;">Northeast</div>
<svg style="left:1195.3px;top:395.6px" width="21.4" height="22.6" viewBox="0 0 20 20" preserveAspectRatio="none"><circle cx="10" cy="10" r="10" fill="#3b3b3b"/><path d="M5.9 5.9 L14.1 14.1 M14.1 5.9 L5.9 14.1" stroke="#fff" stroke-width="2.0"/></svg>
<div class="b" style="left:1069.10px;top:645.00px;width:286.20px;height:39.90px;background:#ececec;border:1.7px solid #4a4a4a;border-radius:19.9px;box-sizing:border-box;"></div>
<div class="t" style="left:1086.50px;top:655.00px;font-size:20.35px;transform:scaleX(0.8568);color:#363636;">Feb 1, 2024 - Feb 28, 2026</div>
<svg style="left:1325.8px;top:654.0px" width="21.4" height="22.6" viewBox="0 0 20 20" preserveAspectRatio="none"><circle cx="10" cy="10" r="10" fill="#3b3b3b"/><path d="M5.9 5.9 L14.1 14.1 M14.1 5.9 L5.9 14.1" stroke="#fff" stroke-width="2.0"/></svg>
<div class="b" style="left:1069.10px;top:729.20px;width:289.70px;height:40.20px;background:#ececec;border:1.7px solid #4a4a4a;border-radius:20.1px;box-sizing:border-box;"></div>
<div class="t" style="left:1086.50px;top:739.00px;font-size:20.35px;transform:scaleX(0.9010);color:#363636;">Assistant Project Manager</div>
<svg style="left:1329.0px;top:738.4px" width="21.4" height="22.6" viewBox="0 0 20 20" preserveAspectRatio="none"><circle cx="10" cy="10" r="10" fill="#3b3b3b"/><path d="M5.9 5.9 L14.1 14.1 M14.1 5.9 L5.9 14.1" stroke="#fff" stroke-width="2.0"/></svg>
<div class="t" style="left:1069.30px;top:464.00px;font-size:20.64px;transform:scaleX(0.8962);color:#333;">Distance from project:</div>
<div class="t" style="left:1070.40px;top:506.50px;font-size:22.97px;transform:scaleX(0.9037);color:#333;">150+ mi</div>
<div class="t" style="left:1078.30px;top:555.20px;font-size:19.77px;transform:scaleX(0.6824);color:#333;">1</div>
<div class="t" style="left:1473.40px;top:555.20px;font-size:19.77px;transform:scaleX(0.9188);color:#333;">150+</div>
<div class="b" style="left:1106.00px;top:558.90px;width:352.00px;height:10.40px;background:#0a7aff;border-radius:5.2px;"></div>
<div class="b" style="left:1441.4px;top:548.8px;width:26.8px;height:29.2px;border-radius:50%;background:#0a7aff;"></div>
<div class="t" style="left:1069.30px;top:615.10px;font-size:20.64px;transform:scaleX(0.8822);color:#333;">Has availability between:</div>
<div class="t" style="left:1069.30px;top:699.30px;font-size:20.35px;transform:scaleX(0.9089);color:#333;">Title includes:</div>
<div class="t" style="left:1079.60px;top:797.70px;font-size:20.78px;transform:scaleX(0.9566);color:#333;">Add filters</div>
<svg style="left:1179.5px;top:800px" width="12" height="17" viewBox="0 0 12 17"><path d="M1.7 1.4 L9.4 8.4 L1.7 15.4" fill="none" stroke="#333" stroke-width="2.3"/></svg>
<div class="t" style="left:1324.80px;top:973.20px;font-size:20.64px;transform:scaleX(0.8395);color:#6b6b6b;font-weight:bold;-webkit-text-stroke:0;">CANCEL</div>
<div class="t" style="left:1445.80px;top:973.20px;font-size:20.64px;transform:scaleX(0.8359);color:#b8b8b8;font-weight:bold;-webkit-text-stroke:0;">SAVE</div>
<div class="b" style="left:858.00px;top:325.00px;width:281.00px;height:51.30px;background:rgba(97,97,97,.92);border-radius:4.5px;"></div>
<div class="t" style="left:867.80px;top:333.50px;font-size:14.68px;transform:scaleX(0.8365);color:#fff;font-weight:bold;-webkit-text-stroke:0;">This is the distance between the project</div>
<div class="t" style="left:867.80px;top:353.80px;font-size:14.68px;transform:scaleX(0.8263);color:#fff;font-weight:bold;-webkit-text-stroke:0;">address and a person&#x27;s home address.</div>
<svg style="left:0;top:0" width="1866" height="1016" viewBox="0 0 1866 1016"><defs><filter id="ash" x="-20%" y="-20%" width="140%" height="140%"><feGaussianBlur stdDeviation="1.6"/></filter></defs><path d="M1006.2 427.4 L1056.6 467 L1040.7 470 Q1049 520 1070.6 564.5 Q1071 568.5 1067.4 567.6 Q1026.5 518 1016.4 480.7 L1004.3 490 Z" fill="rgba(0,0,0,.28)" filter="url(#ash)" transform="translate(1,2)"/><path d="M1006.2 427.4 L1056.6 467 L1040.7 470 Q1049 520 1070.6 564.5 Q1071 568.5 1067.4 567.6 Q1026.5 518 1016.4 480.7 L1004.3 490 Z" fill="#ff2a00"/></svg>
</div></body></html>
